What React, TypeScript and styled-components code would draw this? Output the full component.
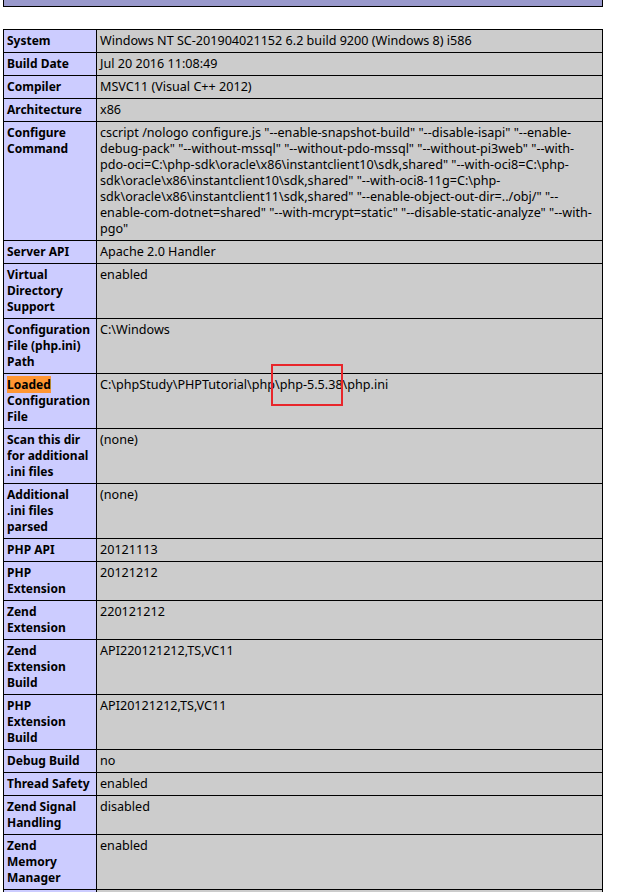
import React from "react";
import styled, { createGlobalStyle } from "styled-components";

const GlobalStyle = createGlobalStyle`
  body {
    margin: 0;
    background: #ffffff;
    font-family: "Noto Sans", "Open Sans", sans-serif;
    color: #000000;
  }
`;

const Page = styled.div`
  padding: 0 3px;
  width: 600px;
`;

// bottom edge of the header table above, scrolled mostly out of view
const HeaderStrip = styled.div`
  height: 6px;
  background-color: #9999cc;
  border: 1px solid #000000;
  border-top: none;
  margin-bottom: 22px;
`;

const InfoTable = styled.table`
  width: 600px;
  border-collapse: collapse;
  table-layout: fixed;
`;

const Cell = styled.td<{ $kind: "e" | "v" }>`
  border: 1px solid #000000;
  font-size: ${(p) => (p.$kind === "e" ? "12px" : "12.6px")};
  line-height: 16px;
  padding: 3px;
  vertical-align: top;
  white-space: pre-line;
  word-wrap: break-word;
  background-color: ${(p) => (p.$kind === "e" ? "#ccccff" : "#cccccc")};
  font-weight: ${(p) => (p.$kind === "e" ? 700 : 400)};
  width: ${(p) => (p.$kind === "e" ? "86px" : "auto")};
`;

const Found = styled.mark`
  background-color: #ff9632;
  color: #000000;
`;

const Marked = styled.span`
  position: relative;
  &::after {
    content: "";
    position: absolute;
    box-sizing: border-box;
    left: -9px;
    width: 72px;
    top: -12px;
    height: 42px;
    border: 2px solid #e8262b;
    pointer-events: none;
  }
`;

type Row = [React.ReactNode, React.ReactNode];

const rows: Row[] = [
  ["System", "Windows NT SC-201904021152 6.2 build 9200 (Windows 8) i586"],
  ["Build Date", "Jul 20 2016 11:08:49"],
  ["Compiler", "MSVC11 (Visual C++ 2012)"],
  ["Architecture", "x86"],
  [
    "Configure\nCommand",
    'cscript /nologo configure.js "--enable-snapshot-build" "--disable-isapi" "--enable-debug-pack" "--without-mssql" "--without-pdo-mssql" "--without-pi3web" "--with-pdo-oci=C:\\php-sdk\\oracle\\x86\\instantclient10\\sdk,shared" "--with-oci8=C:\\php-sdk\\oracle\\x86\\instantclient10\\sdk,shared" "--with-oci8-11g=C:\\php-sdk\\oracle\\x86\\instantclient11\\sdk,shared" "--enable-object-out-dir=../obj/" "--enable-com-dotnet=shared" "--with-mcrypt=static" "--disable-static-analyze" "--with-pgo"',
  ],
  ["Server API", "Apache 2.0 Handler"],
  ["Virtual\nDirectory\nSupport", "enabled"],
  ["Configuration\nFile (php.ini)\nPath", "C:\\Windows"],
  [
    <>
      <Found>Loaded</Found>
      {"\nConfiguration\nFile"}
    </>,
    <>
      C:\phpStudy\PHPTutorial\php\<Marked>php-5.5.38</Marked>\php.ini
    </>,
  ],
  ["Scan this dir\nfor additional\n.ini files", "(none)"],
  ["Additional\n.ini files\nparsed", "(none)"],
  ["PHP API", "20121113"],
  ["PHP\nExtension", "20121212"],
  ["Zend\nExtension", "220121212"],
  ["Zend\nExtension\nBuild", "API220121212,TS,VC11"],
  ["PHP\nExtension\nBuild", "API20121212,TS,VC11"],
  ["Debug Build", "no"],
  ["Thread Safety", "enabled"],
  ["Zend Signal\nHandling", "disabled"],
  ["Zend\nMemory\nManager", "enabled"],
  ["Zend\nMultibyte\nSupport", "provided by mbstring"],
  ["IPv6 Support", "enabled"],
  ["DTrace Support", "disabled"],
];

const App = () => {
  return (
    <Page>
      <GlobalStyle />
      <HeaderStrip />
      <InfoTable>
        <tbody>
          {rows.map(([label, value], idx) => (
            <tr key={idx}>
              <Cell $kind="e">{label}</Cell>
              <Cell $kind="v">{value}</Cell>
            </tr>
          ))}
        </tbody>
      </InfoTable>
    </Page>
  );
};

export default App;
